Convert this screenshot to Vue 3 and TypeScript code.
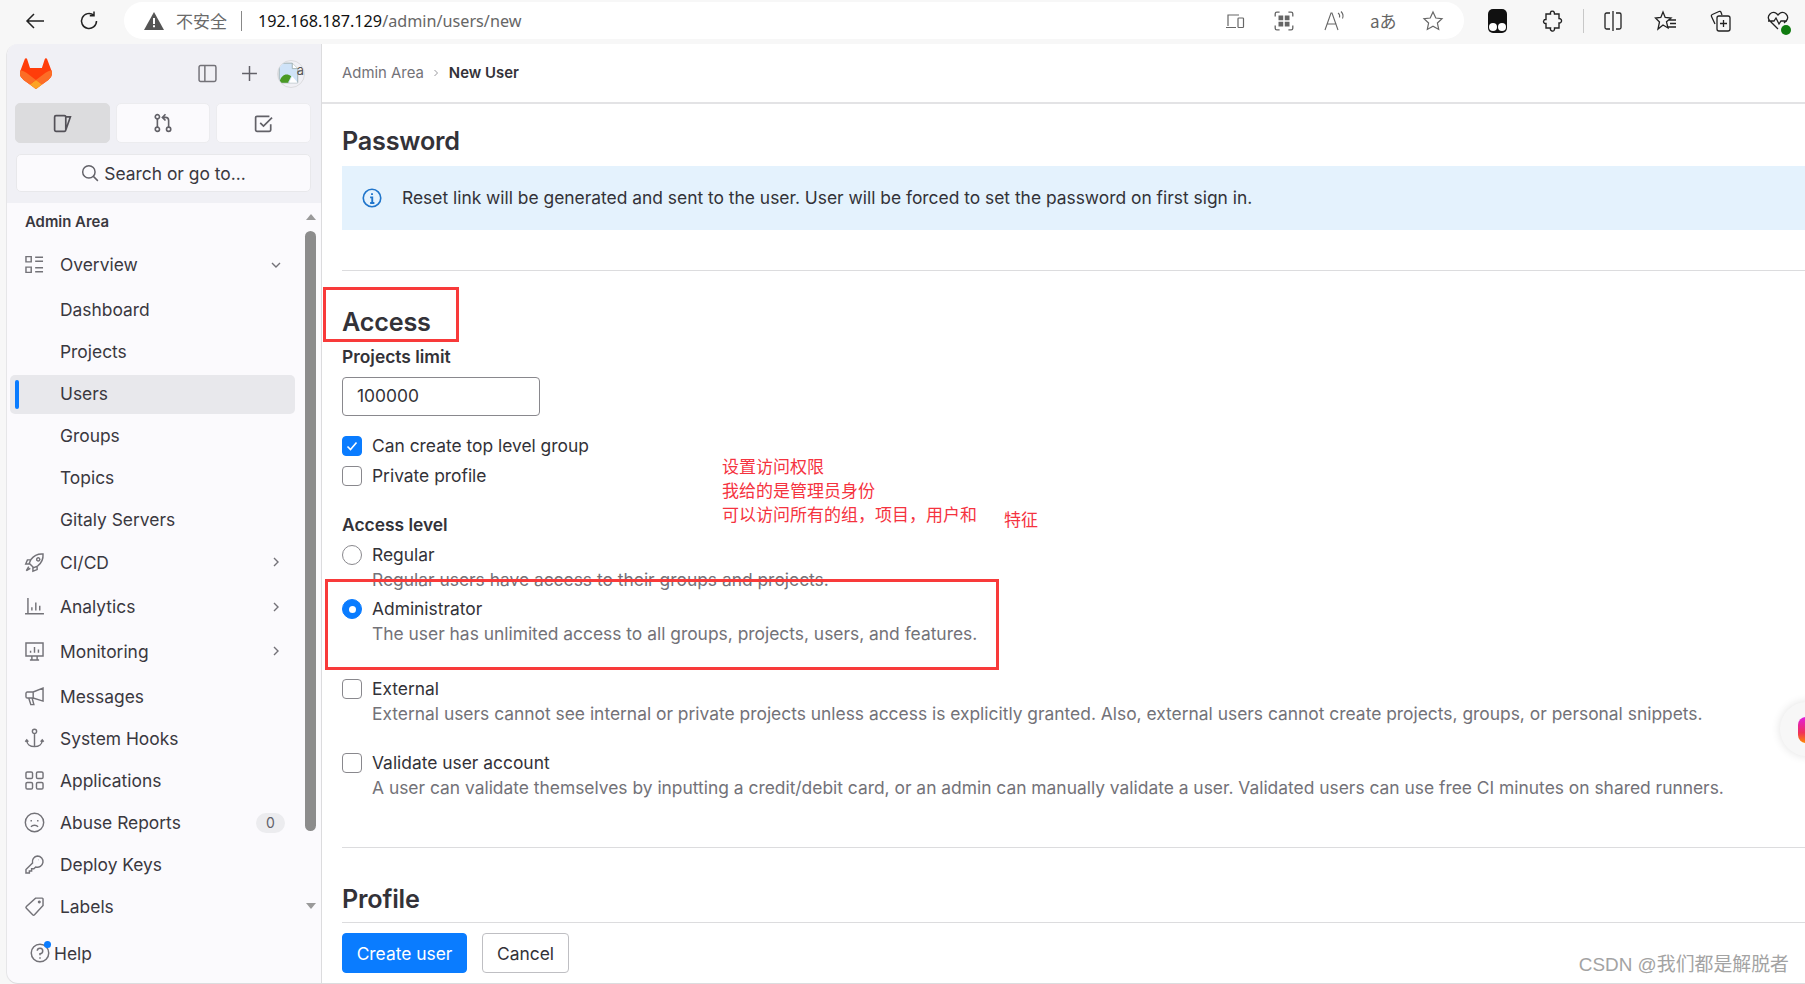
<script setup lang="ts">
interface NavItem { label: string; icon?: string; chevron?: 'down' | 'right'; badge?: string; active?: boolean }

const icons: Record<string, string> = {
  overview: 'M1.5 2h4v4h-4zM1.5 10h4v4h-4zM8.5 2.5h6M8.5 5.5h6M8.5 10.5h6M8.5 13.5h6',
  cicd: 'M14.5 1.5c-4-.3-7 1.2-9.2 4.2L4 8.6 7.4 12l2.9-1.3c3-2.2 4.5-5.2 4.2-9.2zM5 6H2.6L1.3 9.2h3M10 11v2.4l-3.2 1.3v-3M3.6 11.2 1.8 14.2l3-1.8M10 4.8a1.2 1.2 0 1 0 1.7 1.7 1.2 1.2 0 0 0-1.7-1.7z',
  analytics: 'M3 1.5v12M.8 13.5h14.4M6 11V8.5M9 11V5M12 11V7.5',
  monitor: 'M1.5 1.5h13v10h-13zM4.5 14.5h7M6 11.5v3M10 11.5v3M5 9V7.5M8 9V4.5M11 9V6.5',
  messages: 'M14.5 1.5v10L7 9.2H2.5a1 1 0 0 1-1-1V5.6a1 1 0 0 1 1-1H7zM7 4.6v4.6M3.6 9.2l1.6 5h2.3L6.3 9.6',
  hooks: 'M8 1a1.6 1.6 0 1 1 0 3.2A1.6 1.6 0 1 1 8 1zM8 4.2v10M1 10.5 2.1 9l1.2 1.5M12.7 10.5 13.9 9l1.1 1.5M2.1 9.2c0 3.2 2.5 5 5.9 5s5.9-1.8 5.9-5',
  apps: 'M2.5 1.5h3a1 1 0 0 1 1 1v3a1 1 0 0 1-1 1h-3a1 1 0 0 1-1-1v-3a1 1 0 0 1 1-1zM10.500 1.500h3a1 1 0 0 1 1 1v3a1 1 0 0 1-1 1h-3a1 1 0 0 1-1-1v-3a1 1 0 0 1 1-1zM2.500 9.500h3a1 1 0 0 1 1 1v3a1 1 0 0 1-1 1h-3a1 1 0 0 1-1-1v-3a1 1 0 0 1 1-1zM10.500 9.500h3a1 1 0 0 1 1 1v3a1 1 0 0 1-1 1h-3a1 1 0 0 1-1-1v-3a1 1 0 0 1 1-1z',
  abuse: 'M8 1a7 7 0 1 1 0 14A7 7 0 1 1 8 1zM5.3 11.3c1.4-1.7 4-1.7 5.4 0M5.5 6v1.2M10.5 6v1.2',
  key: 'M10.2 1.5a4.3 4.3 0 1 1-1.3 8.4L7.5 11.3H5.8V13H4.1v1.5H1.5v-2.7l5-5a4.3 4.3 0 0 1 3.7-5.3zM11 4.4h.2',
  labels: 'M8.8 1.6h5.1a.6.6 0 0 1 .6.6v5.1L8 14.3a1 1 0 0 1-1.4 0L1.8 9.4a1 1 0 0 1 0-1.4zM11.6 4a.6.6 0 1 0 .1 0z',
}

const items: NavItem[] = [
  { label: 'Overview', icon: 'overview', chevron: 'down' },
  { label: 'Dashboard' },
  { label: 'Projects' },
  { label: 'Users', active: true },
  { label: 'Groups' },
  { label: 'Topics' },
  { label: 'Gitaly Servers' },
  { label: 'CI/CD', icon: 'cicd', chevron: 'right' },
  { label: 'Analytics', icon: 'analytics', chevron: 'right' },
  { label: 'Monitoring', icon: 'monitor', chevron: 'right' },
  { label: 'Messages', icon: 'messages' },
  { label: 'System Hooks', icon: 'hooks' },
  { label: 'Applications', icon: 'apps' },
  { label: 'Abuse Reports', icon: 'abuse', badge: '0' },
  { label: 'Deploy Keys', icon: 'key' },
  { label: 'Labels', icon: 'labels' },
]
</script>

<template>
  <div class="app">
    <header class="browser">
      <svg class="nav-ic" width="22" height="22" viewBox="0 0 22 22"><path d="M20 11H3M10 4l-7 7 7 7" fill="none" stroke="#222" stroke-width="1.5"/></svg>
      <svg class="nav-ic reload" width="22" height="22" viewBox="0 0 22 22"><path d="M18.5 11a7.5 7.5 0 1 1-2.6-5.7M16 1.5v4.2h-4.2" fill="none" stroke="#222" stroke-width="1.5"/></svg>
      <div class="omnibox">
        <svg class="warn" width="20" height="18" viewBox="0 0 20 18"><path d="M10 0 20 18H0z" fill="#555"/><path d="M9 6h2v6H9zM9 13.3h2v2H9z" fill="#fff"/></svg>
        <span class="insecure">不安全</span>
        <span class="sep"></span>
        <span class="url"><b>192.168.187.129</b>/admin/users/new</span>
        <span class="spring"></span>
        <svg class="om-ic first" width="22" height="22" viewBox="0 0 22 22" fill="none" stroke="#666" stroke-width="1.2"><path d="M4 16V5h11M2 17.500h10"/><rect x="14" y="8" width="5.500" height="9.500" rx=".8"/></svg>
        <svg class="om-ic qr" width="22" height="22" viewBox="0 0 20 20" fill="none" stroke="#666" stroke-width="1.200"><path d="M2 6V3.500A1.500 1.500 0 0 1 3.500 2H6M14 2h2.500A1.500 1.500 0 0 1 18 3.500V6M18 14v2.500a1.500 1.500 0 0 1-1.500 1.500H14M6 18H3.500A1.500 1.500 0 0 1 2 16.500V14"/><path d="M5 5h4.300v4.300H5zM10.700 5H15v4.300h-4.300zM5 10.700h4.300V15H5zM10.700 10.700H15V15h-4.300z" fill="#666" stroke="none"/></svg>
        <svg class="om-ic aloud" width="22" height="22" viewBox="0 0 22 22" fill="none" stroke="#666" stroke-width="1.100"><path d="M2 20 8 3h1l6 17M4.500 14h9M15 3c1.500 1 2 2.500 1.500 4.500M18 1.500c2 2 2.500 4.500 1.500 7"/></svg>
        <span class="translate">aあ</span>
        <svg class="om-ic star" width="22" height="22" viewBox="0 0 22 22" fill="none" stroke="#666" stroke-width="1.200"><path d="m11 2 2.800 6 6.200.7-4.600 4.300 1.300 6.400L11 16.200l-5.700 3.200 1.300-6.400L2 8.700 8.200 8z"/></svg>
      </div>
      <div class="ext-tool black"><span></span><span></span></div>
      <svg class="tool puzzle" width="22" height="24" viewBox="0 0 22 24" fill="none" stroke="#222" stroke-width="1.400"><path d="M9 2.500c2-1 3.500 0 3.500 2.500h4.500v4.500c2.500 0 3 2 2.200 3.500-.5 1-1.200 1.200-2.200 1V19h-4.500c.3 2.500-1 3.500-2.500 3-1.500-.5-1.800-1.800-1.500-3H4v-4.500c-2 .3-3-1.500-2.200-3 .5-1 1.200-1.200 2.200-1V5h4.500C8.300 4 8.300 3 9 2.500z"/></svg>
      <span class="tool-sep"></span>
      <svg class="tool split" width="22" height="22" viewBox="0 0 22 22" fill="none" stroke="#222" stroke-width="1.300"><path d="M8 3H4.500A1.500 1.500 0 0 0 3 4.500v13A1.500 1.500 0 0 0 4.500 19H8M14 3h3.500A1.500 1.500 0 0 1 19 4.500v13a1.500 1.500 0 0 1-1.500 1.500H14M11 1v20"/></svg>
      <svg class="tool fav" width="24" height="24" viewBox="0 0 24 24" fill="none" stroke="#222" stroke-width="1.300"><path d="m9 3 2.200 5.500 5.800.5-4.500 3.800L14 19l-5-3-5 4 1.500-7L1.500 9l5.300-.5zM15 11h7M16 14.500h6M14 18h8"/></svg>
      <svg class="tool coll" width="24" height="24" viewBox="0 0 24 24" fill="none" stroke="#222" stroke-width="1.300"><path d="M6 15 2.500 7.500a1.500 1.500 0 0 1 .8-2L10 2.500a1.500 1.500 0 0 1 2 .8l1 2.700"/><rect x="8" y="7" width="13" height="15" rx="2"/><path d="M14.500 11v7M11 14.500h7"/></svg>
      <span class="tool heart">
        <svg width="24" height="24" viewBox="0 0 24 24" fill="none" stroke="#222" stroke-width="1.300"><path d="M12 20 3.500 11.500a5 5 0 0 1 7-7L12 6l1.500-1.500a5 5 0 0 1 7 7L18 14M2 12h6l2-3 3 6 2-3h6"/></svg>
        <i></i>
      </span>
    </header>

    <div class="shell">
      <aside class="sidebar">
        <div class="top-panel">
          <div class="logo-row">
            <svg class="logo" width="32" height="31" viewBox="0 0 25 24"><path d="m24.507 9.500-.034-.090L21.082.562a.896.896 0 0 0-1.694.091l-2.290 7.010H7.825L5.535.653a.898.898 0 0 0-1.694-.090L.451 9.411.416 9.500a6.297 6.297 0 0 0 2.090 7.278l.012.010.030.022 5.160 3.867 2.560 1.935 1.554 1.176a1.051 1.051 0 0 0 1.268 0l1.555-1.176 2.560-1.935 5.197-3.890.014-.010A6.297 6.297 0 0 0 24.507 9.500Z" fill="#ff3d0a"/><path d="m24.507 9.500-.034-.090a11.440 11.440 0 0 0-4.560 2.051l-7.447 5.632 4.742 3.584 5.197-3.890.014-.010A6.297 6.297 0 0 0 24.507 9.500Z" fill="#fc6d26"/><path d="m7.707 20.677 2.560 1.935 1.555 1.176a1.051 1.051 0 0 0 1.268 0l1.555-1.176 2.560-1.935-4.743-3.584-4.755 3.584Z" fill="#fca326"/><path d="M5.010 11.461a11.430 11.430 0 0 0-4.560-2.050L.416 9.500a6.297 6.297 0 0 0 2.090 7.278l.012.010.030.022 5.160 3.867 4.745-3.584-7.444-5.632Z" fill="#fc6d26"/></svg>
            <span class="spring"></span>
            <svg class="hd-ic" width="19" height="19" viewBox="0 0 18 18" fill="none" stroke="#737278" stroke-width="1.400"><rect x="1" y="1.500" width="16" height="15" rx="1.500"/><path d="M6.500 1.500v15"/></svg>
            <svg class="hd-ic plus" width="17" height="17" viewBox="0 0 16 16" fill="none" stroke="#626168" stroke-width="1.400"><path d="M8 1v14M1 8h14"/></svg>
            <span class="avatar">
              <svg width="22" height="24" viewBox="0 0 20 22"><path d="M1 2h12l5 5v13H1z" fill="#cfe3f8" stroke="#9aa" stroke-width=".8"/><path d="M13 2v5h5" fill="#fff" stroke="#9aa" stroke-width=".8"/><path d="M1 20c2-8 7-9 11-6l-3 6z" fill="#4a9a24"/><path d="M13 14l5 6h-8z" fill="#fff"/></svg>
              <em>a</em>
            </span>
          </div>
          <div class="tabs">
            <button class="tab on" type="button">
              <svg width="21" height="21" viewBox="0 0 16 16" fill="none" stroke="#535158" stroke-width="1.300"><path d="M2 3a1 1 0 0 1 1-1h6.500a1 1 0 0 1 1 1v10a1 1 0 0 1-1 1H3a1 1 0 0 1-1-1zM10.500 3H14l-3.500 10"/></svg>
            </button>
            <button class="tab" type="button">
              <svg width="20" height="20" viewBox="0 0 16 16" fill="none" stroke="#626168" stroke-width="1.300"><circle cx="3.500" cy="3" r="1.700"/><circle cx="3.500" cy="13" r="1.700"/><circle cx="12.500" cy="13" r="1.700"/><path d="M3.500 4.700v6.600M12.500 11.300V6a2.500 2.500 0 0 0-2.500-2.500H8M10 1 7.500 3.500 10 6"/></svg>
            </button>
            <button class="tab" type="button">
              <svg width="21" height="21" viewBox="0 0 16 16" fill="none" stroke="#626168" stroke-width="1.300"><path d="M13.500 8.500V13a1 1 0 0 1-1 1H3a1 1 0 0 1-1-1V3.500a1 1 0 0 1 1-1h9.500M5.500 7.500 8 10l6.500-6.500"/></svg>
            </button>
          </div>
          <div class="search">
            <svg width="18" height="18" viewBox="0 0 16 16" fill="none" stroke="#626168" stroke-width="1.300"><circle cx="7" cy="7" r="5.500"/><path d="m11 11 4 4"/></svg>
            <span>Search or go to...</span>
          </div>
        </div>

        <div class="nav-wrap">
          <nav class="nav">
            <div class="nav-title">Admin Area</div>
            <a v-for="it in items" :key="it.label" class="row" :class="{ section: it.chevron, active: it.active }">
              <svg v-if="it.icon" class="row-ic" width="21" height="21" viewBox="0 0 16 16" fill="none" stroke="#737278" stroke-width="1.100"><path :d="icons[it.icon]"/></svg>
              <span v-else class="row-ic"></span>
              <span class="row-label">{{ it.label }}</span>
              <svg v-if="it.chevron === 'down'" class="chev" width="12" height="12" viewBox="0 0 12 12" fill="none" stroke="#737278" stroke-width="1.400"><path d="m2 4 4 4 4-4"/></svg>
              <svg v-if="it.chevron === 'right'" class="chev" width="12" height="12" viewBox="0 0 12 12" fill="none" stroke="#737278" stroke-width="1.400"><path d="m4 2 4 4-4 4"/></svg>
              <span v-if="it.badge" class="badge">{{ it.badge }}</span>
            </a>
          </nav>
          <div class="track">
            <i class="arrow up"></i>
            <span class="thumb"></span>
            <i class="arrow down"></i>
          </div>
        </div>

        <div class="help">
          <span class="help-ic">
            <svg width="20" height="20" viewBox="0 0 16 16" fill="none" stroke="#737278" stroke-width="1.200"><circle cx="8" cy="8" r="7"/><path d="M5.800 6.200A2.200 2.200 0 1 1 8 8.600v1.200M8 11.300v1.200"/></svg>
            <i></i>
          </span>
          <span>Help</span>
        </div>
      </aside>

      <main class="main">
        <div class="crumbs">
          <span>Admin Area</span>
          <svg width="10" height="10" viewBox="0 0 10 10" fill="none" stroke="#9a9a9f" stroke-width="1"><path d="m3.500 2 3 3-3 3"/></svg>
          <strong>New User</strong>
        </div>

        <div class="content">
          <h2 class="h-pass">Password</h2>
          <div class="alert">
            <svg width="20" height="20" viewBox="0 0 16 16" fill="none" stroke="#1f75cb" stroke-width="1.300"><circle cx="8" cy="8" r="7"/><path d="M6.500 7.500H8.200V12M6.500 12h3.400M8 4.200v1.300" stroke-width="1.500"/></svg>
            <span>Reset link will be generated and sent to the user. User will be forced to set the password on first sign in.</span>
          </div>
          <hr class="rule r1" />

          <h2 class="h-access">Access</h2>
          <label class="f-label l-limit">Projects limit</label>
          <div class="input">100000</div>

          <div class="check c1">
            <span class="box checked"><svg width="14" height="14" viewBox="0 0 14 14" fill="none" stroke="#fff" stroke-width="1.600"><path d="m2.500 7.500 3 3 6-7"/></svg></span>
            <span class="opt-text">Can create top level group</span>
          </div>
          <div class="check">
            <span class="box"></span>
            <span class="opt-text">Private profile</span>
          </div>

          <label class="f-label l-level">Access level</label>
          <div class="opt o-regular"><span class="radio"></span><span class="opt-text">Regular</span></div>
          <p class="help-text t-regular">Regular users have access to their groups and projects.</p>
          <div class="opt o-admin"><span class="radio on"></span><span class="opt-text">Administrator</span></div>
          <p class="help-text">The user has unlimited access to all groups, projects, users, and features.</p>
          <div class="opt o-ext"><span class="box"></span><span class="opt-text">External</span></div>
          <p class="help-text">External users cannot see internal or private projects unless access is explicitly granted. Also, external users cannot create projects, groups, or personal snippets.</p>
          <div class="opt o-val"><span class="box"></span><span class="opt-text">Validate user account</span></div>
          <p class="help-text">A user can validate themselves by inputting a credit/debit card, or an admin can manually validate a user. Validated users can use free CI minutes on shared runners.</p>
          <hr class="rule r2" />

          <h2 class="h-profile">Profile</h2>
          <hr class="rule r3" />
          <div class="actions">
            <button class="btn primary" type="button">Create user</button>
            <button class="btn" type="button">Cancel</button>
          </div>

          <span class="mark m-access"></span>
          <span class="mark m-admin"></span>
          <div class="note">设置访问权限<br />我给的是管理员身份<br />可以访问所有的组，项目，用户和</div>
          <div class="note n2">特征</div>
        </div>

        <div class="float-btn"><i></i></div>
        <div class="watermark">CSDN @我们都是解脱者</div>
      </main>
    </div>
  </div>
</template>

<style scoped>
.app {
  width: 1805px;
  height: 984px;
  overflow: hidden;
  display: flex;
  flex-direction: column;
  background: #f7f7f7;
  font-family: Inter, "Noto Sans CJK SC", sans-serif;
  font-size: 17.4px;
  color: #333238;
}
.spring { flex: 1; }

.browser {
  height: 44px;
  flex: none;
  display: flex;
  align-items: center;
  background: #f7f7f7;
  padding-left: 24px;
  padding-bottom: 3px;
  box-sizing: border-box;
}
.nav-ic { flex: none; }
.reload { margin-left: 32px; }
.omnibox {
  margin-left: 24px;
  width: 1340px;
  height: 37px;
  flex: none;
  background: #fff;
  border-radius: 19px;
  display: flex;
  align-items: center;
  padding-left: 20px;
  box-sizing: border-box;
}
.insecure { margin-left: 12px; font-size: 17px; color: #6a6a6a; font-family: "Noto Sans CJK SC", sans-serif; }
.sep { width: 1px; height: 20px; background: #888; margin: 0 16px 0 14px; }
.url { font-size: 16.200px; color: #666; font-family: "Noto Sans", sans-serif; }
.url b { font-weight: 400; color: #111; }
.om-ic { flex: none; margin-left: 28px; }
.om-ic.first { margin-left: 0; }
.om-ic.qr { margin-left: 27px; }
.om-ic.aloud { margin-left: 28px; }
.translate { flex: none; width: 26px; margin-left: 25px; font-size: 17px; color: #666; text-align: center; font-family: "Noto Sans CJK JP", sans-serif; white-space: nowrap; }
.om-ic.star { margin-left: 26px; margin-right: 20px; }
.ext-tool.black {
  width: 19px;
  height: 24px;
  margin-left: 24px;
  flex: none;
  background: #111;
  border-radius: 5px;
  display: flex;
  align-items: flex-end;
  justify-content: center;
  gap: 1px;
  padding-bottom: 2px;
  box-sizing: border-box;
}
.ext-tool.black span { width: 8px; height: 8px; border-radius: 50%; background: #fff; }
.tool { flex: none; display: block; }
.puzzle { margin-left: 35px; }
.tool-sep { width: 1px; height: 24px; background: #c8c8c8; margin: 0 18px 0 19px; flex: none; }
.fav { margin-left: 30px; }
.coll { margin-left: 31px; }
.heart { margin-left: 33px; position: relative; width: 24px; height: 24px; }
.heart i {
  position: absolute;
  right: -1px;
  bottom: -2px;
  width: 10px;
  height: 10px;
  border-radius: 50%;
  background: #107c10;
}

.shell { flex: 1; display: flex; min-height: 0; }
.sidebar {
  width: 316px;
  margin-left: 6px;
  flex: none;
  display: flex;
  flex-direction: column;
  background: #fbfafd;
  border-right: 1px solid #dcdcde;
  border-bottom: 1px solid #dcdcde;
  border-left: 1px solid #e6e6e8;
  border-radius: 12px 0 0 12px;
  overflow: hidden;
  box-sizing: border-box;
  color: #3a383f;
}
.top-panel { background: #f0f0f5; height: 159px; flex: none; padding: 0 10px 0 8px; box-sizing: border-box; }
.logo-row { height: 59px; display: flex; align-items: center; padding-left: 5px; }
.hd-ic { flex: none; }
.plus { margin-left: 24px; }
.avatar {
  position: relative;
  width: 28px;
  height: 28px;
  margin-left: 19px;
  margin-right: 6px;
  border-radius: 50%;
  border: 1px solid #dcdcde;
  box-sizing: border-box;
  overflow: hidden;
  display: block;
}
.avatar svg { position: absolute; left: 0; top: 0; }
.avatar em { position: absolute; right: 0; top: 2px; font-style: normal; font-size: 13px; line-height: 14px; color: #555; }
.tabs { display: flex; gap: 6px; height: 40px; }
.tab {
  flex: 1;
  padding: 0;
  border: 1px solid #ececef;
  border-radius: 5px;
  background: #fbfafd;
  display: flex;
  align-items: center;
  justify-content: center;
}
.tab.on { background: #dcdcde; border-color: #dcdcde; }
.search {
  height: 38px;
  margin-top: 11px;
  margin-left: 1px;
  background: #fbfafd;
  border: 1px solid #e8e8eb;
  border-radius: 5px;
  box-sizing: border-box;
  display: flex;
  align-items: center;
  justify-content: center;
  gap: 5px;
}
.nav-wrap { height: 725px; flex: none; display: flex; }
.nav { width: 298px; flex: none; padding-left: 3px; box-sizing: border-box; }
.nav-title { height: 40px; display: flex; align-items: center; padding-bottom: 2px; box-sizing: border-box; padding-left: 15px; font-size: 14.900px; font-weight: 600; }
.row {
  position: relative;
  height: 42px;
  width: 285px;
  display: flex;
  align-items: center;
  padding-left: 15px;
  padding-right: 10px;
  padding-bottom: 1px;
  box-sizing: border-box;
  border-radius: 5px;
  color: #3a383f;
}
.row.section { height: 44.500px; }
.row.section + .row:not(.section) { margin-top: 2px; }
.row.section:first-of-type + .row { margin-top: 1px; }
.row.active { height: 39px; margin: 2px 0 1px; padding-bottom: 2px; background: #e8e8ec; }
.row.active::before {
  content: "";
  position: absolute;
  left: 5px;
  top: 5px;
  bottom: 5px;
  width: 4px;
  border-radius: 2px;
  background: #0a7cff;
}
.row-ic { width: 21px; height: 21px; flex: none; margin-left: -1.500px; margin-right: 15.500px; }
.row-label { flex: 1; }
.chev { flex: none; margin-right: 3px; }
.badge {
  width: 29px;
  height: 20px;
  border-radius: 10px;
  background: #ececef;
  font-size: 14px;
  line-height: 20px;
  text-align: center;
  color: #626168;
}
.track { width: 11px; flex: none; display: flex; flex-direction: column; align-items: center; padding-top: 11px; box-sizing: border-box; }
.thumb { width: 11px; height: 600px; flex: none; margin-top: 11px; border-radius: 6px; background: #8c8c8c; }
.arrow { width: 0; height: 0; flex: none; border-left: 5px solid transparent; border-right: 5px solid transparent; }
.arrow.up { border-bottom: 6px solid #9a9a9a; }
.arrow.down { margin-top: 72px; border-top: 6px solid #9a9a9a; }
.help { flex: 1; display: flex; align-items: center; gap: 4px; padding-left: 23px; padding-bottom: 5px; }
.help-ic { position: relative; width: 20px; height: 20px; display: block; }
.help-ic svg { display: block; }
.help-ic i { position: absolute; right: -1px; top: -2px; width: 7px; height: 7px; border-radius: 50%; background: #0a7cff; }

.main { flex: 1; min-width: 0; position: relative; background: #fff; border-bottom: 1px solid #dcdcde; box-sizing: border-box; }
.crumbs {
  height: 60px;
  box-sizing: border-box;
  border-bottom: 2px solid #e3e3e5;
  display: flex;
  align-items: center;
  gap: 7px;
  padding-left: 20px;
  font-size: 14.900px;
  color: #737278;
}
.crumbs strong { font-weight: 600; color: #333238; margin-left: 1px; }
.content { position: relative; padding: 21px 0 0 20px; }
h2 { margin: 0; height: 32px; line-height: 32px; font-size: 25.200px; font-weight: 600; letter-spacing: -.2px; color: #333238; }
.alert {
  height: 64px;
  margin-top: 9px;
  background: #e4f2fd;
  display: flex;
  align-items: center;
  padding-left: 20px;
  padding-bottom: 1px;
  box-sizing: border-box;
  gap: 20px;
  color: #333238;
}
.rule { border: 0; height: 1px; margin: 0; background: #dcdcde; }
.r1 { margin-top: 40px; }
.h-access { margin-top: 35px; }
.f-label { display: block; height: 24px; line-height: 24px; font-weight: 600; }
.l-limit { margin-top: 7px; }
.input {
  width: 198px;
  height: 39px;
  margin-top: 8px;
  box-sizing: border-box;
  border: 1px solid #89888d;
  border-radius: 4px;
  padding-left: 14px;
  line-height: 36px;
  color: #333238;
}
.check { height: 30px; display: flex; align-items: center; gap: 10px; }
.c1 { margin-top: 15px; }
.l-level { margin-top: 22px; }
.opt { height: 24px; display: flex; align-items: center; gap: 10px; margin-top: 5px; }
.opt-text { padding-bottom: 2px; }
.o-regular { margin-top: 6px; }
.o-admin { margin-top: 5px; }
.o-ext { margin-top: 31px; }
.o-val { margin-top: 25px; }
.box, .radio {
  width: 20px;
  height: 20px;
  flex: none;
  box-sizing: border-box;
  border: 1px solid #89888d;
  background: #fff;
  display: flex;
  align-items: center;
  justify-content: center;
}
.box { border-radius: 4px; }
.box.checked { background: #0a7cff; border-color: #0a7cff; }
.radio { border-radius: 50%; }
.radio.on { background: #0a7cff; border-color: #0a7cff; }
.radio.on::after { content: ""; width: 7px; height: 7px; border-radius: 50%; background: #fff; }
.help-text { margin: 1px 0 0 30px; height: 24px; line-height: 24px; color: #737278; white-space: nowrap; }
.r2 { margin-top: 47px; }
.h-profile { margin-top: 35px; }
.r3 { margin-top: 7px; }
.actions { display: flex; gap: 15px; margin-top: 10px; }
.btn {
  height: 40px;
  padding: 0;
  width: 87px;
  border: 1px solid #bfbfc3;
  border-radius: 4px;
  background: #fff;
  font: inherit;
  color: #333238;
}
.btn.primary { width: 125px; background: #0a7cff; border-color: #0a7cff; color: #fff; }
.mark { position: absolute; border: 3px solid #f83a3a; box-sizing: border-box; pointer-events: none; }
.m-access { left: 1px; top: 183px; width: 136px; height: 55px; }
.m-admin { left: 3px; top: 475px; width: 674px; height: 91px; }
.note {
  position: absolute;
  left: 400px;
  top: 350px;
  font-family: "Noto Sans CJK SC", sans-serif;
  font-size: 17px;
  line-height: 24px;
  color: #f5333f;
  white-space: nowrap;
}
.note.n2 { left: 682px; top: 403px; }
.float-btn {
  position: absolute;
  right: -28px;
  top: 658px;
  width: 53px;
  height: 54px;
  border-radius: 50%;
  background: #f7f7f7;
  box-shadow: 0 0 10px rgba(0, 0, 0, .12);
}
.float-btn i {
  position: absolute;
  left: 18px;
  top: 15px;
  width: 16px;
  height: 26px;
  border-radius: 8px;
  background: linear-gradient(#e01fe0, #f0325a 60%, #ff8a00);
}
.watermark {
  position: absolute;
  right: 16px;
  bottom: 5px;
  font-family: "Liberation Sans", "Noto Sans CJK SC", sans-serif;
  font-size: 18.900px;
  line-height: 26px;
  color: #a3a3a3;
  white-space: nowrap;
}
</style>

<style>
html, body { margin: 0; overflow: hidden; }
</style>
